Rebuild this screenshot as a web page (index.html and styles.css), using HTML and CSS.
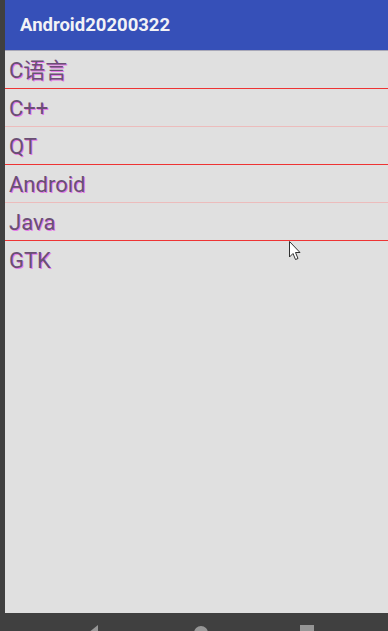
FILE: index.html
```
<!DOCTYPE html>
<html>
<head>
<meta charset="utf-8">
<link rel="stylesheet" href="styles.css">
</head>
<body>
<div class="device">
  <div class="edge"></div>
  <div class="screen">
    <div class="appbar"><span class="title">Android20200322</span></div>
    <ul class="list">
      <li class="row red">C语言</li>
      <li class="row pink">C++</li>
      <li class="row red">QT</li>
      <li class="row pink">Android</li>
      <li class="row red">Java</li>
      <li class="row">GTK</li>
    </ul>
  </div>
  <div class="navbar">
    <span class="nav-back"></span>
    <span class="nav-home"></span>
    <span class="nav-recent"></span>
  </div>
  <svg class="cursor" width="12" height="20" viewBox="0 0 12 20">
    <path d="M0.5 0.5 L0.5 16 L4 12.5 L6.5 18.5 L9 17.5 L6.5 11.5 L11 11.5 Z" fill="#ffffff" stroke="#303030" stroke-width="1"/>
  </svg>
</div>
</body>
</html>
```
FILE: styles.css
```
html, body {
  margin: 0;
  padding: 0;
}
body {
  width: 388px;
  height: 631px;
  overflow: hidden;
  background: #404040;
  font-family: Roboto, "Noto Sans CJK SC", sans-serif;
}
.device {
  position: relative;
  width: 388px;
  height: 631px;
  display: grid;
  grid-template-columns: 5px 1fr;
  grid-template-rows: 613px 18px;
}
.edge {
  background: #404040;
  grid-row: 1 / 3;
}
.screen {
  background: #e0e0e0;
  display: flex;
  flex-direction: column;
}
.appbar {
  height: 50px;
  background: #3650b8;
  border-bottom: 1px solid #a8a8b8;
  display: flex;
  align-items: center;
  padding-left: 15px;
}
.title {
  color: #f2f2f6;
  font-size: 18.5px;
  font-weight: 700;
  margin-top: -1px;
}
.list {
  list-style: none;
  margin: 0;
  padding: 0;
}
.row {
  height: 37px;
  line-height: 39px;
  padding-left: 4px;
  font-size: 22px;
  color: #6a4f74;
  text-shadow: 1px 1px 0 #e47ce8;
  border-bottom: 1px solid transparent;
}
.row.red {
  border-bottom-color: #ee3434;
}
.row.pink {
  border-bottom-color: #ecbcbc;
}
.navbar {
  background: #404040;
  position: relative;
  overflow: hidden;
}
.nav-back {
  position: absolute;
  left: 83px;
  top: 12px;
  width: 0;
  height: 0;
  border-top: 8px solid transparent;
  border-bottom: 8px solid transparent;
  border-right: 10px solid #969696;
}
.nav-home {
  position: absolute;
  left: 189px;
  top: 13px;
  width: 14px;
  height: 14px;
  border-radius: 50%;
  background: #969696;
}
.nav-recent {
  position: absolute;
  left: 295px;
  top: 12px;
  width: 14px;
  height: 14px;
  background: #969696;
}
.cursor {
  position: absolute;
  left: 289px;
  top: 241px;
}
```
